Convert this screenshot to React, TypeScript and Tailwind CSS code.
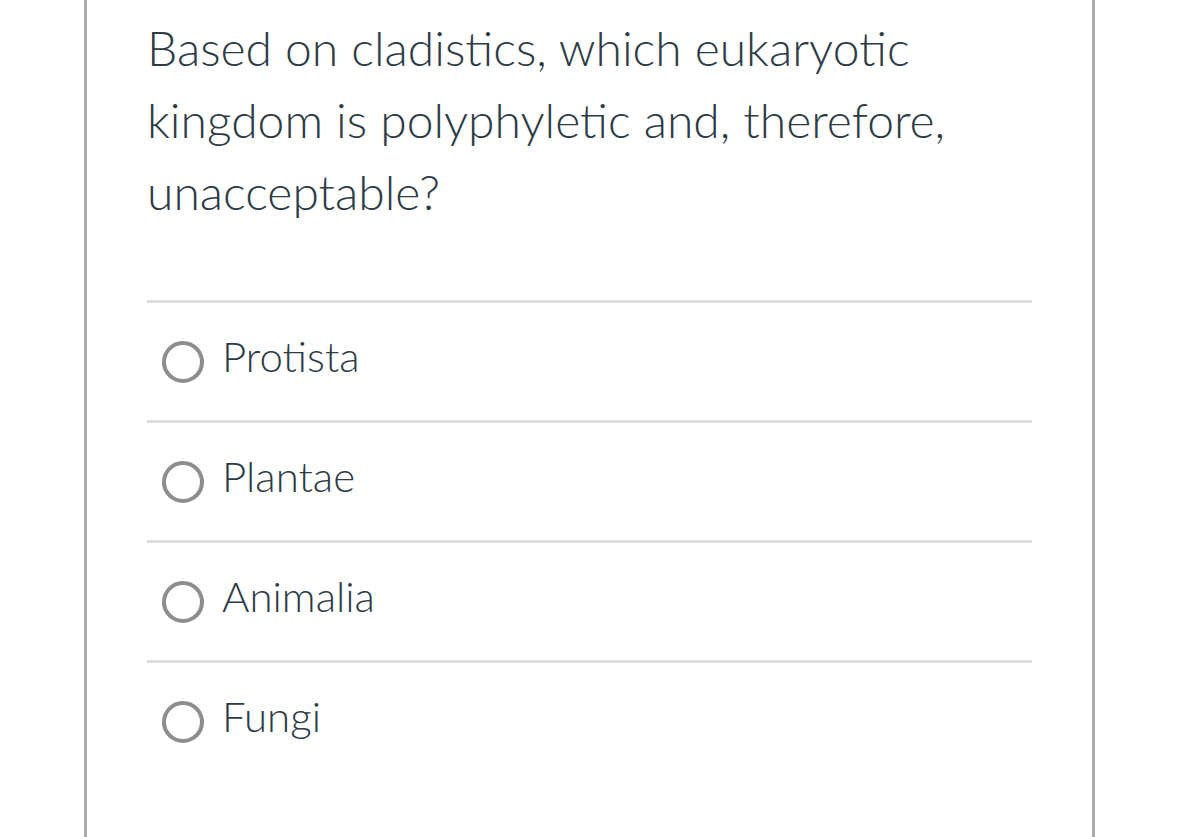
import React from 'react';

const answers = ['Protista', 'Plantae', 'Animalia', 'Fungi'];

function Radio() {
  return (
    <span className="block w-[42px] h-[42px] shrink-0 rounded-full border-[4px] border-[#8d8d8d] bg-white" />
  );
}

export default function App() {
  return (
    <div className="min-h-[837px] w-full bg-white overflow-hidden" style={{ fontFamily: 'Lato, "Noto Sans", sans-serif' }}>
      <div className="ml-[84px] w-[1011px] min-h-[837px] border-x-[3px] border-[#ababab] pl-[60px] pr-[60px]">
        {/* 题目 */}
        <p className="pt-[12px] text-[48px] leading-[72px] font-light text-[#2d3b45]">
          Based on cladistics, which eukaryotic kingdom is polyphyletic and, therefore, unacceptable?
        </p>

        {/* 选项 */}
        <div className="mt-[72px]">
          {answers.map((a) => (
            <div key={a} className="h-[120px] border-t-[3px] border-[#dddddd] flex items-center gap-[18px] pl-[15px]">
              <Radio />
              <span className="text-[42px] font-light text-[#2d3b45] -mt-[10px]">{a}</span>
            </div>
          ))}
        </div>
      </div>
    </div>
  );
}
